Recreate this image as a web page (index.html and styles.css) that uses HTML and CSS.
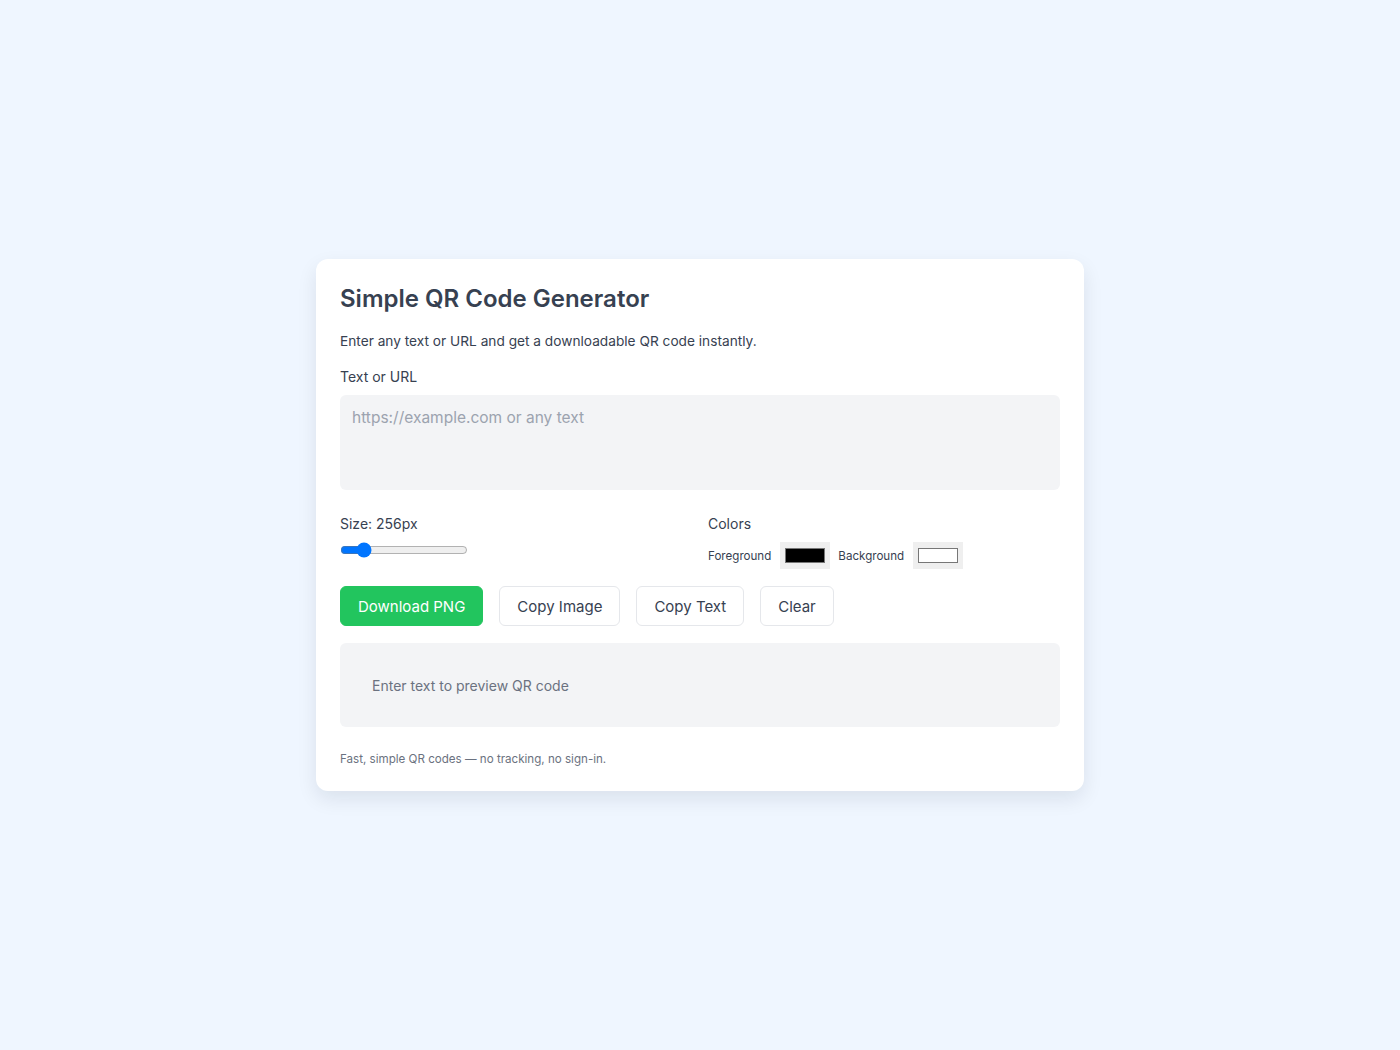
FILE: index.html
```html
<!DOCTYPE html>
<html lang="en">
<head>
<meta charset="utf-8">
<title>Simple QR Code Generator</title>
<link rel="stylesheet" href="styles.css">
</head>
<body>
<main class="page">
  <section class="card">
    <h1 class="title">Simple QR Code Generator</h1>
    <p class="desc">Enter any text or URL and get a downloadable QR code instantly.</p>
    <label class="label" for="txt">Text or URL</label>
    <textarea id="txt" class="input" placeholder="https://example.com or any text"></textarea>
    <div class="options">
      <div class="opt">
        <div class="opt-label">Size: 256px</div>
        <input class="range" type="range" min="128" max="1024" step="32" value="256">
      </div>
      <div class="opt">
        <div class="opt-label">Colors</div>
        <div class="colors">
          <span class="small">Foreground</span>
          <input class="swatch" type="color" value="#000000">
          <span class="small">Background</span>
          <input class="swatch" type="color" value="#ffffff">
        </div>
      </div>
    </div>
    <div class="actions">
      <button class="btn btn-primary">Download PNG</button>
      <button class="btn">Copy Image</button>
      <button class="btn">Copy Text</button>
      <button class="btn">Clear</button>
    </div>
    <div class="preview">Enter text to preview QR code</div>
    <p class="foot">Fast, simple QR codes — no tracking, no sign-in.</p>
  </section>
</main>
</body>
</html>
```
FILE: styles.css
```css
* { box-sizing: border-box; }
html, body { margin: 0; padding: 0; }
body {
  background: #eff6ff;
  font-family: "Inter", "Liberation Sans", sans-serif;
  color: #374151;
  min-height: 1050px;
}
.page {
  min-height: 1050px;
  display: flex;
  align-items: center;
  justify-content: center;
}
.card {
  width: 768px;
  background: #fff;
  border-radius: 12px;
  padding: 24px;
  box-shadow: 0 8px 20px rgba(15, 23, 42, 0.09);
  display: flex;
  flex-direction: column;
}
.title {
  margin: 0;
  font-size: 24px;
  line-height: 32px;
  font-weight: 600;
  color: #374151;
}
.desc {
  margin: 16px 0 0;
  font-size: 13.7px;
  line-height: 20px;
  color: #374151;
}
.label {
  margin-top: 16px;
  font-size: 14px;
  line-height: 20px;
}
.input {
  margin-top: 8px;
  height: 95px;
  border: none;
  border-radius: 6px;
  background: #f3f4f6;
  padding: 12px;
  font-family: inherit;
  font-size: 15.5px;
  line-height: 22px;
  color: #374151;
  resize: none;
  outline: none;
}
.input::placeholder { color: #9ca3af; }
.options {
  margin-top: 24px;
  display: grid;
  grid-template-columns: 1fr 1fr;
  gap: 16px;
}
.opt-label {
  font-size: 14px;
  line-height: 20px;
}
.range {
  margin: 8px 0 0;
  width: 128px;
  accent-color: #0075ff;
}
.colors {
  margin-top: 8px;
  display: flex;
  align-items: center;
  gap: 8px;
}
.swatch {
  margin: 0 0 0 1px;
  width: 50px;
  height: 27px;
  border: 1px solid #efefef;
  background: #efefef;
  border-radius: 0;
}
.small { font-size: 11.6px; color: #374151; }
.actions {
  margin-top: 17px;
  display: flex;
  gap: 16px;
}
.btn {
  height: 40px;
  padding: 0 17px;
  border: 1px solid #e5e7eb;
  border-radius: 6px;
  background: #fff;
  font-family: inherit;
  font-size: 15px;
  color: #374151;
}
.btn-primary {
  background: #22c55e;
  border-color: #22c55e;
  color: #fff;
}
.preview {
  margin-top: 17px;
  height: 84px;
  border-radius: 6px;
  background: #f3f4f6;
  padding: 0 32px;
  display: flex;
  align-items: center;
  font-size: 14px;
  color: #6b7280;
}
.foot {
  margin: 24px 0 0;
  font-size: 11.6px;
  line-height: 16px;
  color: #6b7280;
}
```
